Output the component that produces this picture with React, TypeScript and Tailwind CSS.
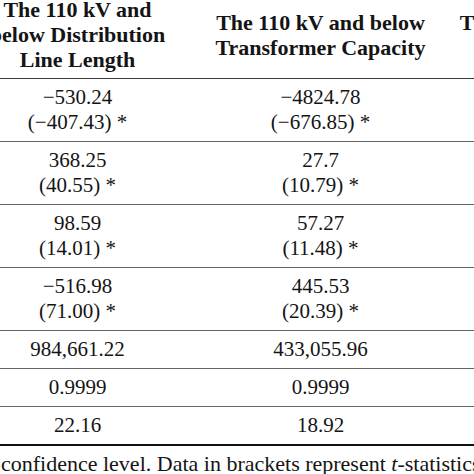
const rows: { a: string[]; b: string[] }[] = [
  { a: ["\u2212530.24", "(\u2212407.43) *"], b: ["\u22124824.78", "(\u2212676.85) *"] },
  { a: ["368.25", "(40.55) *"], b: ["27.7", "(10.79) *"] },
  { a: ["98.59", "(14.01) *"], b: ["57.27", "(11.48) *"] },
  { a: ["\u2212516.98", "(71.00) *"], b: ["445.53", "(20.39) *"] },
  { a: ["984,661.22"], b: ["433,055.96"] },
  { a: ["0.9999"], b: ["0.9999"] },
  { a: ["22.16"], b: ["18.92"] },
]

function Cell({ lines }: { lines: string[] }) {
  return (
    <td className="px-2 py-[6px] text-center align-middle">
      {lines.map((l) => (
        <div key={l} className="whitespace-nowrap">{l}</div>
      ))}
    </td>
  )
}

function App() {
  return (
    <div className="w-[474px] h-[474px] overflow-hidden bg-white text-[#141414] [font-family:'Liberation_Serif',serif]">
      <div className="-ml-[44px] -mt-[9px] w-[730px]">
        <table className="w-full table-fixed border-collapse text-[21px] leading-[25px]">
          <colgroup>
            <col className="w-[243px]" />
            <col className="w-[243px]" />
            <col className="w-[244px]" />
          </colgroup>
          <thead>
            <tr className="border-b-[1.5px] border-[#3a3a3a] text-[22px] font-bold">
              <th className="px-2 py-[6px] text-center align-middle whitespace-nowrap">
                <div>The 110 kV and</div>
                <div>below Distribution</div>
                <div>Line Length</div>
              </th>
              <th className="px-2 py-[6px] text-center align-middle whitespace-nowrap">
                <div>The 110 kV and below</div>
                <div>Transformer Capacity</div>
              </th>
              <th className="px-2 py-[6px] text-center align-middle whitespace-nowrap">
                <div>The 110 kV and below</div>
                <div>Substations</div>
              </th>
            </tr>
          </thead>
          <tbody>
            {rows.map((r, i) => (
              <tr
                key={i}
                className={i === rows.length - 1 ? "border-b-2 border-[#111]" : "border-b border-[#666]"}
              >
                <Cell lines={r.a} />
                <Cell lines={r.b} />
                <td />
              </tr>
            ))}
          </tbody>
        </table>
        <p className="ml-[45px] pt-[5px] text-[22px] leading-[25px] whitespace-nowrap">
          confidence level. Data in brackets represent <i>t</i>-statistics.
        </p>
      </div>
    </div>
  )
}

export default App
